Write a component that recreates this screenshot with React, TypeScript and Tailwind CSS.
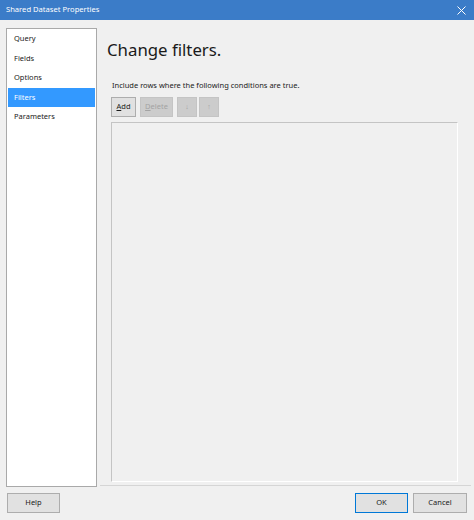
import { useState } from "react";

const items = ["Query", "Fields", "Options", "Filters", "Parameters"];

const btn = "h-[20px] border border-[#adadad] bg-[#e1e1e1] flex items-center justify-center";
const off = "h-[20px] border border-[#c4c4c4] bg-[#cccccc] text-[#a3a3a3] flex items-center justify-center";

const App = () => {
    const [sel, setSel] = useState(3);
    return (
        <div className="w-[474px] h-[520px] bg-[#f0f0f0] flex flex-col text-[7.5px] text-[#1a1a1a]" style={{ fontFamily: '"Noto Sans", "Open Sans", sans-serif' }}>
            {/* title bar */}
            <div className="h-[20px] bg-[#3b7cc8] flex items-center justify-between pl-[6px] pr-[8px] text-white">
                <span className="text-[7.6px]">Shared Dataset Properties</span>
                <svg width="9" height="9" viewBox="0 0 9 9">
                    <path d="M0.5 0.5 L8.5 8.5 M8.5 0.5 L0.5 8.5" stroke="#ffffff" strokeWidth="1" />
                </svg>
            </div>

            <div className="flex pt-[8px]">
                {/* left nav */}
                <div className="ml-[6px] w-[91px] h-[459px] border border-[#a9a9a9] bg-white px-px">
                    {items.map((it, i) => (
                        <div
                            key={it}
                            onClick={() => setSel(i)}
                            className={`h-[19.5px] flex items-center pl-[6px] ${i === sel ? "bg-[#3399ff] text-white" : ""}`}
                        >
                            {it}
                        </div>
                    ))}
                </div>

                {/* right panel */}
                <div className="ml-[3px] w-[371px] h-[458px] flex flex-col border-b border-[#d5d5d5]">
                    <div className="pl-[7px] pt-[10px] text-[16.8px] leading-[24px]">Change filters.</div>
                    <div className="pl-[12px] mt-[17px] leading-[12px]">Include rows where the following conditions are true.</div>
                    <div className="flex pl-[11px] mt-[6px]">
                        <div className={`${btn} w-[25px]`}><span><u>A</u>dd</span></div>
                        <div className={`${off} w-[33px] ml-[4px]`}><span><u>D</u>elete</span></div>
                        <div className={`${off} w-[20px] ml-[4px] text-[#7a7a7a] text-[7px]`}>↓</div>
                        <div className={`${off} w-[20px] ml-[2px] text-[#7a7a7a] text-[7px]`}>↑</div>
                    </div>
                    <div className="ml-[11px] mt-[5px] w-[347px] h-[360px] border-t border-l border-[#c4c4c4] border-r border-b border-r-white border-b-white" />
                </div>
            </div>

            {/* footer */}
            <div className="flex items-center pt-[6px] px-[7px]">
                <div className={`${btn} w-[53px]`}>Help</div>
                <div className="flex-1" />
                <div className="h-[20px] w-[53px] border border-[#0078d7] bg-[#e1e1e1] flex items-center justify-center">OK</div>
                <div className={`${btn} w-[54px] ml-[5px]`}>Cancel</div>
            </div>
        </div>
    );
};

export default App;
